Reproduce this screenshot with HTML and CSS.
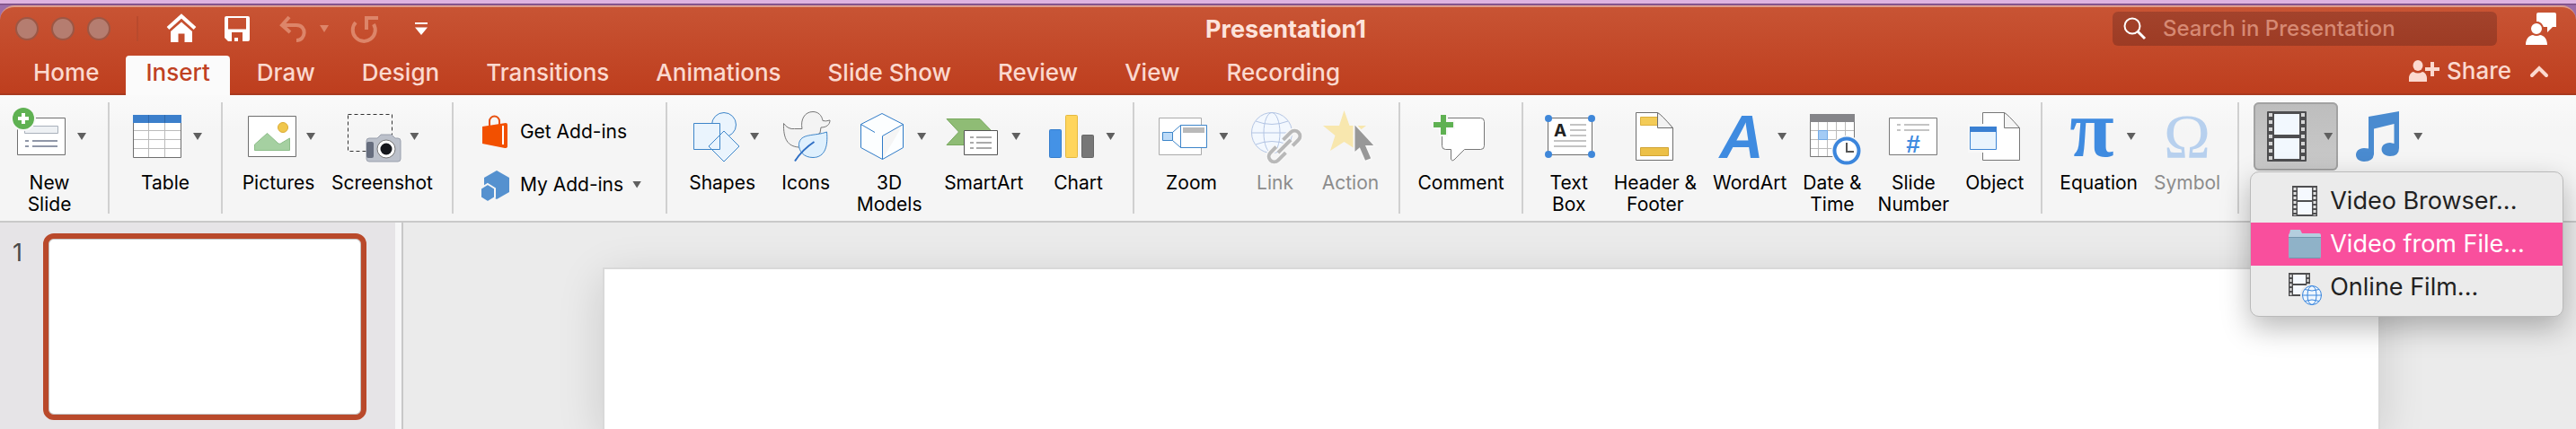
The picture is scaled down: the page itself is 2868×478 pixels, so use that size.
FILE: index.html
```html
<!DOCTYPE html>
<html lang="en">
<head>
  <meta charset="UTF-8">
  <title>Presentation1</title>
  <link rel="stylesheet" href="styles.css">
</head>
<body>
<div class="window">
  <header class="top">
    <div class="titlebar">
      <div class="quick">
        <i class="light"></i><i class="light"></i><i class="light"></i>
        <i class="divider"></i>
        <button class="qbtn" aria-label="Home"><svg width="32" height="32" viewBox="0 0 32 32"><path d="M1 15.500L16 2l15 13.500" fill="none" stroke="#fff" stroke-width="4"/><path d="M4 19L16 8.500 28 19v12h-8.500v-9.500h-7V31H4z" fill="#fff"/></svg></button>
        <button class="qbtn" aria-label="Save"><svg width="32" height="32" viewBox="0 0 32 32"><path d="M4 2h24a2 2 0 0 1 2 2v24a2 2 0 0 1-2 2H6l-4-4V4a2 2 0 0 1 2-2zM6 4v12.500h20V4zM10 20v10h3v-4h4v4h5V20z" fill="#fff" fill-rule="evenodd"/></svg></button>
        <button class="qbtn" aria-label="Undo"><svg width="32" height="32" viewBox="0 0 32 32"><path d="M12 3L4 12l9 8M5 12h15c12 0 11 17 0 17" fill="none" stroke="#dd8569" stroke-width="4"/></svg></button>
        <i class="caret pale"></i>
        <button class="qbtn redo" aria-label="Redo"><svg width="32" height="32" viewBox="0 0 32 32"><path d="M6 9a12.500 12.500 0 1 0 20 2M18 17V4h13" fill="none" stroke="#dd8569" stroke-width="4"/></svg></button>
        <button class="qbtn more" aria-label="Customize"><svg width="14" height="14" viewBox="0 0 14 14"><path d="M0 0h14v2H0zM0 5.500h14L7 14z" fill="#fff"/></svg></button>
      </div>
      <h1>Presentation1</h1>
      <div class="right">
        <label class="search">
          <svg width="26" height="26" viewBox="0 0 26 26"><g fill="none" stroke="#fff" stroke-width="2"><circle cx="10" cy="10" r="8.500"/><path d="M16 16l8 8" stroke-width="3"/></g></svg>
          <input type="text" placeholder="Search in Presentation" aria-label="Search in Presentation">
        </label>
        <svg width="34" height="36" viewBox="0 0 34 36"><g fill="#fff"><path d="M14 0h18q2 0 2 2v14h-4l-6 6v-6h-5a7 7 0 0 0-7-6V2q0-2 2-2z"/><circle cx="12" cy="18" r="7" stroke="#c65031" stroke-width="2"/><path d="M0 36c0-7 4-10.500 8-11q4 2 8 0c4 .500 8 4 8 11z"/></g></svg>
      </div>
    </div>
    <nav class="tabs">
      <button>Home</button>
      <button class="current">Insert</button>
      <button>Draw</button>
      <button>Design</button>
      <button>Transitions</button>
      <button>Animations</button>
      <button>Slide Show</button>
      <button>Review</button>
      <button>View</button>
      <button>Recording</button>
      <button class="share"><svg width="34" height="24" viewBox="0 0 34 24"><g fill="#fbd9cf"><ellipse cx="10" cy="6" rx="5.500" ry="6"/><path d="M0 24v-4c0-4 3-7 5-7q5 3 10 0c2 0 5 3 5 7v4zM24 2h4v6h6v4h-6v6h-4v-6h-6V8h6z"/></g></svg>Share</button>
      <button class="fold" aria-label="Collapse ribbon"><svg width="22" height="14" viewBox="0 0 22 14"><path d="M3 11l8-8 8 8" fill="none" stroke="#fbd9cf" stroke-width="4" stroke-linecap="round"/></svg></button>
    </nav>
  </header>

  <div class="ribbon">
    <div class="group first">
      <button class="tool">
        <span class="icon">
          <svg viewBox="0 0 64 64"><path d="M5.500 11.500h53v41h-53z" fill="#fff" stroke="#6e6e6e"/><path d="M13.500 20.500h37v8h-37z" fill="#eef1f4" stroke="#a9b1bb"/><path d="M14 37h4M14 43h4M22 37h28M22 43h28" stroke="#9097a8" stroke-width="2"/><circle cx="12" cy="12" r="14" fill="#f8f8f8"/><circle cx="12" cy="12" r="12" fill="#5fb152"/><path d="M12 6v12M6 12h12" stroke="#fff" stroke-width="4"/></svg>
          <i class="caret"></i>
        </span>
        <span>New<br>Slide</span>
      </button>
    </div>

    <div class="group">
      <button class="tool">
        <span class="icon">
          <svg viewBox="0 0 64 64"><path d="M5.500 8.500h53v47h-53z" fill="#fff"/><path d="M22.500 16v39M40.500 16v39M6 25.500h52M6 35.500h52M6 45.500h52" stroke="#bbb"/><path d="M5.500 16v39.500h53V16" fill="none" stroke="#6e6e6e"/><path d="M5 8h54v9H5z" fill="#3c7fcb"/><path d="M22.500 8v9M40.500 8v9" stroke="#2f68ab"/></svg>
          <i class="caret"></i>
        </span>
        <span>Table</span>
      </button>
    </div>

    <div class="group">
      <button class="tool">
        <span class="icon">
          <svg viewBox="0 0 64 64"><path d="M7.500 9.500h53v45h-53z" fill="#fff" stroke="#6e6e6e"/><circle cx="46" cy="22" r="5.500" fill="#f0c74d" stroke="#dbac36"/><path d="M14.500 47.500V41l14-12.500L41 40q2 1 4-1l8.500-5v13.500z" fill="#a5d0a1" stroke="#8cbd88"/></svg>
          <i class="caret"></i>
        </span>
        <span>Pictures</span>
      </button>
      <button class="tool">
        <span class="icon">
          <svg viewBox="0 0 64 64"><path d="M3.500 7.500h49v41h-49z" fill="none" stroke="#333" stroke-dasharray="4 3"/><path d="M24 37q0-3 3-3h9l4-4h12l4 4h3q3 0 3 3v20q0 3-3 3H27q-3 0-3-3z" fill="#bcc1cb" stroke="#9aa0ad"/><rect x="24" y="38" width="8" height="18" rx="2" fill="#666d7e"/><circle cx="46" cy="46" r="10" fill="#fff" stroke="#777"/><circle cx="46" cy="46" r="6.500" fill="#16181d"/></svg>
          <i class="caret"></i>
        </span>
        <span>Screenshot</span>
      </button>
    </div>

    <div class="group addins">
      <button>
        <svg width="36" height="40" viewBox="0 0 36 40"><path d="M12 13V8a5.500 5.500 0 0 1 11 0v4" fill="none" stroke="#e8500f" stroke-width="2"/><path d="M4 14l26-4q2 0 2 2v24q0 2-3 2L4 33z" fill="#f25000"/><path d="M27 13v21" stroke="#fff" stroke-width="2"/></svg>
        <span>Get Add-ins</span>
      </button>
      <button>
        <svg width="36" height="40" viewBox="0 0 36 40"><path d="M6 12l14-8 14 8v16l-14 8-14-8z" fill="#5591cf"/><path d="M10 19l8 5v10l-8 5-8-5V24z" fill="#5591cf" stroke="#f6f6f6" stroke-width="2"/></svg>
        <span>My Add-ins</span>
        <i class="caret"></i>
      </button>
    </div>

    <div class="group narrow loose">
      <button class="tool">
        <span class="icon">
          <svg viewBox="0 0 64 64"><g fill="#eaf4fd" stroke="#3d85c9"><circle cx="43" cy="19" r="13.500"/><path d="M9.500 17.500h29v29h-29zM43 26l17 17-17 17-17-17z"/></g></svg>
          <i class="caret"></i>
        </span>
        <span>Shapes</span>
      </button>
      <button class="tool">
        <span class="icon">
          <svg viewBox="0 0 64 64"><path d="M28 23.500C26 13 31 4.500 40 4.500c6 0 10 4 11 10q3 1 8-.500c0 5-4 8-10 8l-1 6-20 16h-4C12 43 7 35 7.500 17.500q5 7 12 6z" fill="#f3f3f3" stroke="#777"/><path d="M55.500 27C57 42 54 55.500 40 55.500c-10 0-16-7-15.500-15C26 28 42 32 55.500 27z" fill="#dff0fd" stroke="#3d85c9"/><path d="M20 59.500Q28 47 41.500 38" fill="none" stroke="#2f6fc4" stroke-width="2"/></svg>
        </span>
        <span>Icons</span>
      </button>
      <button class="tool">
        <span class="icon">
          <svg viewBox="0 0 64 64"><path d="M33 6.500l23.500 12v26l-23 13-24-13v-26zM9.500 18.500l15.500 9M56.500 18.500l-23 13v26" fill="#fcfeff" stroke="#2f7bc8"/></svg>
          <i class="caret"></i>
        </span>
        <span>3D<br>Models</span>
      </button>
      <button class="tool">
        <span class="icon">
          <svg viewBox="0 0 64 64"><path d="M0 12.500h37L51 27 37 41.500H0L13.500 27z" fill="#8fbc75" stroke="#78a85e"/><path d="M19.500 25.500h37v27h-37z" fill="#fff" stroke="#555"/><path d="M26 33h4M26 39h4M26 45h4M33 33h17M33 39h17M33 45h17" stroke="#aaa" stroke-width="2"/></svg>
          <i class="caret"></i>
        </span>
        <span>SmartArt</span>
      </button>
      <button class="tool">
        <span class="icon">
          <svg viewBox="0 0 64 64"><rect x="9.500" y="24.500" width="13" height="31" rx="1" fill="#4492e6" stroke="#347dcd"/><rect x="27.500" y="8.500" width="13" height="47" rx="1" fill="#ffd55c" stroke="#e5b93e"/><rect x="45.500" y="30.500" width="13" height="25" rx="1" fill="#777" stroke="#666"/></svg>
          <i class="caret"></i>
        </span>
        <span>Chart</span>
      </button>
    </div>

    <div class="group loose">
      <button class="tool">
        <span class="icon">
          <svg viewBox="0 0 64 64"><path d="M5.500 11.500h47v41h-47z" fill="#fff" stroke="#aaa"/><path d="M20.500 27.500l9-8v25l-9-8z" fill="#fff" stroke="#3d85c9"/><path d="M9.500 27.500h11v9h-11z" fill="#bddbf8" stroke="#3d85c9"/><path d="M29.500 19.500h29v25h-29z" fill="#fff" stroke="#3d85c9"/><path d="M32 22h24v6H32z" fill="#b9b9b9"/></svg>
          <i class="caret"></i>
        </span>
        <span>Zoom</span>
      </button>
      <button class="tool" disabled>
        <span class="icon">
          <svg viewBox="0 0 64 64"><g fill="none" stroke="#b3c5e4"><circle cx="29" cy="28" r="22.500" fill="#f3f8fe"/><ellipse cx="29" cy="28" rx="9" ry="22.500"/><path d="M6.500 28h45M11 15q18 7 36 0M11 41q18-7 36 0"/></g><g transform="translate(43 43) rotate(-45)" fill="none"><path d="M7-6h9a6 6 0 0 1 0 12H7M-7-6h-9a6 6 0 0 0 0 12h9M-10 0h20" stroke="#f7f7f7" stroke-width="7"/><path d="M4-6h12a6 6 0 0 1 0 12H7M-7-6h-9a6 6 0 0 0 0 12h12M-10 0h20" stroke="#b8b8b8" stroke-width="4"/></g></svg>
        </span>
        <span>Link</span>
      </button>
      <button class="tool" disabled>
        <span class="icon">
          <svg viewBox="0 0 64 64"><path d="M25.500 3l6 17H50L35.500 31l5.500 17-15.500-10L10 48l5.500-17L2 20h18z" fill="#f8e7ae"/><path d="M36.500 17v34l6-5 6 14 8-3-6-14h10z" fill="#989898" stroke="#f7f7f7" stroke-width="2"/></svg>
        </span>
        <span>Action</span>
      </button>
    </div>

    <div class="group narrow">
      <button class="tool">
        <span class="icon">
          <svg viewBox="0 0 64 64"><path d="M14.500 11.500h39q4 0 4 4v27q0 4-4 4h-18L24 58q-3 2-3.500-1V46.500h-6q-4 0-4-4v-27q0-4 4-4z" fill="#fff" stroke="#777"/><path d="M12 6v26M0 19h25" stroke="#f8f8f8" stroke-width="10"/><path d="M12 8v22M1 19h22" stroke="#5fb152" stroke-width="6"/></svg>
        </span>
        <span>Comment</span>
      </button>
    </div>

    <div class="group narrow">
      <button class="tool">
        <span class="icon">
          <svg viewBox="0 0 64 64"><path d="M8.500 11.500h49v41h-49z" fill="#fff" stroke="#6e6e6e"/><g fill="#3f87d9"><circle cx="9" cy="12" r="4"/><circle cx="57" cy="12" r="4"/><circle cx="9" cy="52" r="4"/><circle cx="57" cy="52" r="4"/></g><path d="M33 19h18M33 25h18M33 31h18M15 37h36M15 43h36" stroke="#c4c4c4" stroke-width="2"/><text x="15" y="32" class="glyph-a">A</text></svg>
        </span>
        <span>Text<br>Box</span>
      </button>
      <button class="tool">
        <span class="icon">
          <svg viewBox="0 0 64 64"><path d="M10.500 5.500h24l17 17v36h-41z" fill="#fff" stroke="#6e6e6e"/><path d="M15.500 10.500h19v9h-19z" fill="#f3cb57" stroke="#dcb03c"/><path d="M15.500 44.500h31v9h-31z" fill="#ecc047" stroke="#d0a334"/><path d="M34.500 5.500q4 2 17 17h-17z" fill="#f2f2f2" stroke="#6e6e6e"/></svg>
        </span>
        <span>Header &amp;<br>Footer</span>
      </button>
      <button class="tool">
        <span class="icon">
          <svg viewBox="0 0 64 64"><text x="32" y="56" class="glyph-wordart">A</text></svg>
          <i class="caret"></i>
        </span>
        <span>WordArt</span>
      </button>
      <button class="tool">
        <span class="icon">
          <svg viewBox="0 0 64 64"><path d="M7.500 8.500h49v46h-49z" fill="#fff" stroke="#777"/><path d="M16.500 16v38M26.500 16v38M36.500 16v38M46.500 16v38M8 25.500h48M8 35.500h48M8 45.500h48" stroke="#bbb"/><path d="M7 7h50v9H7z" fill="#858589"/><path d="M16.500 25.500h10v10h-10z" fill="#a3cbf5" stroke="#73aae6"/><circle cx="48" cy="48" r="17" fill="#f7f7f7"/><circle cx="48" cy="48" r="13.500" fill="#fff" stroke="#3c86dc" stroke-width="4"/><path d="M48 39v10h8" fill="none" stroke="#555" stroke-width="2"/></svg>
        </span>
        <span>Date &amp;<br>Time</span>
      </button>
      <button class="tool">
        <span class="icon">
          <svg viewBox="0 0 64 64"><path d="M5.500 11.500h53v41h-53z" fill="#fff" stroke="#777"/><path d="M14 19h4M14 25h4M22 19h28M22 25h28" stroke="#c4c4c4" stroke-width="2"/><text x="32" y="50" class="glyph-hash">#</text></svg>
        </span>
        <span>Slide<br>Number</span>
      </button>
      <button class="tool">
        <span class="icon">
          <svg viewBox="0 0 64 64"><path d="M18.500 5.500h24l17 17v36h-41z" fill="#fff" stroke="#777"/><path d="M42.500 5.500q4 2 17 17h-17z" fill="#f5f5f5" stroke="#777"/><path d="M2 18h17v32H2z" fill="#f8f8f8"/><path d="M19 18h17v32H19z" fill="#fff"/><path d="M4.500 21.500h29v25h-29z" fill="#e9f4fd" stroke="#3d85d4"/><path d="M4 21h30v6H4z" fill="#3a80d2"/></svg>
        </span>
        <span>Object</span>
      </button>
    </div>

    <div class="group narrow">
      <button class="tool">
        <span class="icon">
          <svg viewBox="0 0 64 64"><text x="33" y="54" class="glyph-pi">π</text></svg>
          <i class="caret"></i>
        </span>
        <span>Equation</span>
      </button>
      <button class="tool" disabled>
        <span class="icon">
          <svg viewBox="0 0 64 64"><text x="32" y="56" class="glyph-omega">Ω</text></svg>
        </span>
        <span>Symbol</span>
      </button>
    </div>

    <div class="media">
      <div class="dropdown">
        <button class="tool pressed" aria-label="Video">
          <span class="icon">
            <svg viewBox="0 0 64 64"><rect x="9" y="4" width="44" height="56" rx="1" fill="#4e4e50"/><path d="M17 7h28v23H17zM17 34h28v23H17z" fill="#f2f8fe"/><path d="M13 6v54M49 6v54" stroke="#d5d5d5" stroke-width="4" stroke-dasharray="4 4"/></svg>
            <i class="caret"></i>
          </span>
        </button>
        <ul class="menu">
          <li><button>
            <svg viewBox="0 0 40 40"><path d="M6 3h28v34H6z" fill="#4e4e50"/><path d="M12 5h16v14H12zM12 21h16v14H12z" fill="#f5f9fe"/><path d="M9 5v31M31 5v31" stroke="#e3e3e3" stroke-width="3" stroke-dasharray="3 2"/></svg>
            Video Browser...</button></li>
          <li><button class="active">
            <svg viewBox="0 0 40 40"><path d="M2 10q0-1 1-2l1-4h11l2 4h19q2 0 2 2v10H2z" fill="#b4cede"/><path d="M2 12h36v22q0 2-2 2H4q-2 0-2-2z" fill="#8fb2c8"/><path d="M2 12.500h36M3 35.500h34" stroke="#7196ad"/></svg>
            Video from File...</button></li>
          <li><button>
            <svg viewBox="0 0 40 40"><path d="M2 4h24v26H2z" fill="#4e4e50"/><path d="M7 6h14v10H7zM7 18h14v10H7z" fill="#f5f9fe"/><path d="M4.500 6v23M23.500 6v23" stroke="#e3e3e3" stroke-width="2" stroke-dasharray="3 2"/><g fill="none" stroke="#3a86dd"><circle cx="28" cy="29" r="13" fill="#ebebeb" stroke="none"/><circle cx="28" cy="29" r="10.500" fill="#eef6fe"/><ellipse cx="28" cy="29" rx="5" ry="10.500"/><path d="M17.500 29h21M20 22.500q8 3 16 0M20 35.500q8-3 16 0"/></g></svg>
            Online Film...</button></li>
        </ul>
      </div>
      <button class="tool" aria-label="Audio">
        <span class="icon">
          <svg viewBox="0 0 64 64"><path d="M22 10l34-6v41q0 9-10 9c-12 0-13-15 0-15l4.500 1V18L28 23.500V52q-1 8-11 8c-12 0-12-15 0-15l5 .500z" fill="#4a8bd0"/></svg>
          <i class="caret"></i>
        </span>
      </button>
    </div>
  </div>

  <main class="work">
    <aside class="slides">
      <span class="num">1</span>
      <div class="thumb"></div>
    </aside>
    <section class="stage">
      <div class="slide"></div>
    </section>
  </main>
</div>
</body>
</html>
```

FILE: styles.css
```css
* {
  margin: 0;
  padding: 0;
  box-sizing: border-box;
}

body {
  background-color: #deb3e0;
  font-family: Inter, "Liberation Sans", sans-serif;
  font-size: 21px;
  color: #000;
}

button {
  border: 0;
  background: none;
  font: inherit;
  color: inherit;
}

svg {
  display: block;
  flex: none;
  overflow: visible;
}

ul {
  list-style: none;
}

.window {
  display: flex;
  flex-direction: column;
  min-height: 100vh;
  padding-top: 6px;
  background: linear-gradient(#deb3e0 4px, #6b3d70 4px, #9c6da9 6px, #9c6da9 30px, #ebebeb 30px);
}

/* title bar and tabs */
.top {
  border-top: 2px solid #dd9c8c;
  border-bottom: 2px solid #a83a20;
  border-radius: 16px 16px 0 0;
  background: linear-gradient(#c85434, #be3e1e);
}

.titlebar {
  display: grid;
  grid-template-columns: 1fr auto 1fr;
  align-items: center;
  height: 48px;
  padding: 0 22px 0 17px;
}

.titlebar h1 {
  padding-top: 2px;
  font-size: 27px;
  line-height: 32px;
  font-weight: 700;
  color: #fde3db;
}

.quick {
  display: flex;
  align-items: center;
}

.light {
  width: 26px;
  height: 26px;
  margin-right: 14px;
  border: 2px solid #9c5745;
  border-radius: 50%;
  background-color: #b57d70;
}

.divider {
  width: 2px;
  height: 28px;
  margin: 0 32px 0 15px;
  background-color: #b94a2d;
}

.qbtn {
  margin-right: 30px;
}

.quick .caret {
  margin: 0 24px 0 -16px;
}

.qbtn.more {
  margin-left: 10px;
}

.right {
  display: flex;
  justify-content: flex-end;
  align-items: center;
  gap: 32px;
}

.search {
  display: flex;
  align-items: center;
  width: 428px;
  height: 38px;
  padding: 0 12px;
  border-radius: 6px;
  background: linear-gradient(#a3432c, #9d3b24);
}

.search input {
  flex: 1;
  min-width: 0;
  margin-left: 18px;
  border: 0;
  outline: 0;
  background: none;
  font: 500 24px/32px Inter, sans-serif;
}

.search input::placeholder {
  color: #d68973;
  opacity: 1;
}

.tabs {
  display: flex;
  align-items: stretch;
  gap: 8px;
  height: 48px;
  padding: 6px 30px 0 15px;
  font-size: 26px;
  font-weight: 500;
  line-height: 32px;
  color: #fbd9cf;
}

.tabs button {
  padding: 0 22px 4px;
}

.tabs .current {
  margin-bottom: -2px;
  padding-bottom: 6px;
  border-radius: 4px 4px 0 0;
  background-color: #fbfbfb;
  color: #c04122;
}

.tabs .share {
  display: flex;
  align-items: center;
  gap: 8px;
  margin-left: auto;
  padding: 0 12px 8px 0;
}

.tabs .fold {
  padding: 0 0 6px;
}

.search svg {
  margin: auto 0;
}

/* ribbon */
.ribbon {
  display: flex;
  padding: 8px 0;
  border-bottom: 2px solid #c9c9c9;
  background: linear-gradient(#fafafa, #f5f5f5 40px);
}

.group {
  display: flex;
  min-height: 124px;
  padding: 0 12px;
  border-right: 2px solid #d0d0d0;
}

.group.first {
  padding: 0 15px 0 5px;
}

.group.narrow {
  padding: 0 10px;
}

.tool {
  display: flex;
  flex-direction: column;
  align-items: center;
  padding: 6px 9px 0;
  line-height: 24px;
}

/* second label line runs into the ribbon's bottom padding */
.group .tool {
  margin-bottom: -2px;
}

.loose .tool {
  padding: 6px 10px 0;
}

.tool:disabled {
  color: #8c8c8c;
}

.icon {
  display: flex;
  align-items: center;
  gap: 8px;
  margin-bottom: 8px;
}

.icon svg {
  width: 64px;
  height: 64px;
}

.caret {
  flex: none;
  width: 10px;
  height: 8px;
  background-color: #5f5f5f;
  clip-path: polygon(0 0, 100% 0, 50% 100%);
}

.caret.pale {
  background-color: #dd8569;
}

.group.addins {
  flex-direction: column;
  justify-content: center;
  gap: 19px;
  padding: 0 27px 0 28px;
}

.addins button {
  display: flex;
  align-items: center;
  gap: 10px;
}

.glyph-a {
  font: 700 19px Inter, sans-serif;
  fill: #222;
}

.glyph-hash {
  font: 700 28px "Liberation Sans", sans-serif;
  fill: #3f8be0;
  text-anchor: middle;
}

.glyph-wordart {
  font: italic 700 68px "Liberation Sans", sans-serif;
  fill: #3f8be0;
  text-anchor: middle;
}

.glyph-pi {
  font: 700 90px "Liberation Serif", serif;
  fill: #3f8be0;
  text-anchor: middle;
}

.glyph-omega {
  font: 400 70px "Liberation Serif", serif;
  fill: #b7d0ee;
  text-anchor: middle;
}

/* video and audio */
.media {
  display: flex;
  align-items: flex-start;
  gap: 2px;
  padding-left: 16px;
}

.dropdown {
  position: relative;
}

.media .tool {
  padding: 6px;
}

.media > .tool {
  padding-left: 10px;
}

.media .icon {
  margin-bottom: 0;
}

.media .pressed {
  border-radius: 6px;
  background: linear-gradient(#bdbdbd, #cacaca);
  box-shadow: inset 0 0 0 2px #a2a2a2;
}

.menu {
  position: absolute;
  top: 77px;
  left: -4px;
  z-index: 1;
  width: 349px;
  padding: 8px 0;
  border: 1px solid #bababa;
  border-radius: 10px;
  background-color: #ebebeb;
  box-shadow: 0 12px 32px rgba(0, 0, 0, .28);
}

.menu button {
  display: flex;
  align-items: center;
  gap: 8px;
  width: 100%;
  height: 48px;
  padding-left: 40px;
  font-size: 27px;
  line-height: 32px;
  color: #222;
}

.menu svg {
  width: 40px;
  height: 40px;
}

.menu .active {
  background-color: #f94f9d;
  color: #fff;
}

/* slides */
.work {
  display: flex;
  flex: 1;
  background-color: #ebebeb;
}

.slides {
  display: flex;
  align-items: flex-start;
  gap: 20px;
  width: 449px;
  padding: 12px 39px 8px 14px;
  border-right: 2px solid #c8c8c8;
  background-color: #e6e4e7;
  box-shadow: inset -7px 0 #f6f6f7;
}

.num {
  width: 14px;
  margin-top: 6px;
  font-size: 27px;
  line-height: 32px;
  color: #4a4a4a;
}

.thumb {
  flex: 1;
  aspect-ratio: 360 / 208;
  border: 6px solid #b9492b;
  border-radius: 12px;
  background-color: #fff;
  box-shadow: inset 0 0 0 1px #c4c4c4;
}

.stage {
  display: flex;
  flex: 1;
  padding: 50px 218px 0 222px;
  overflow: hidden;
}

.slide {
  flex: 1;
  border: 2px solid #d9d9d9;
  border-bottom: 0;
  background-color: #fff;
  box-shadow: 0 12px 48px rgba(0, 0, 0, .14);
}
```
